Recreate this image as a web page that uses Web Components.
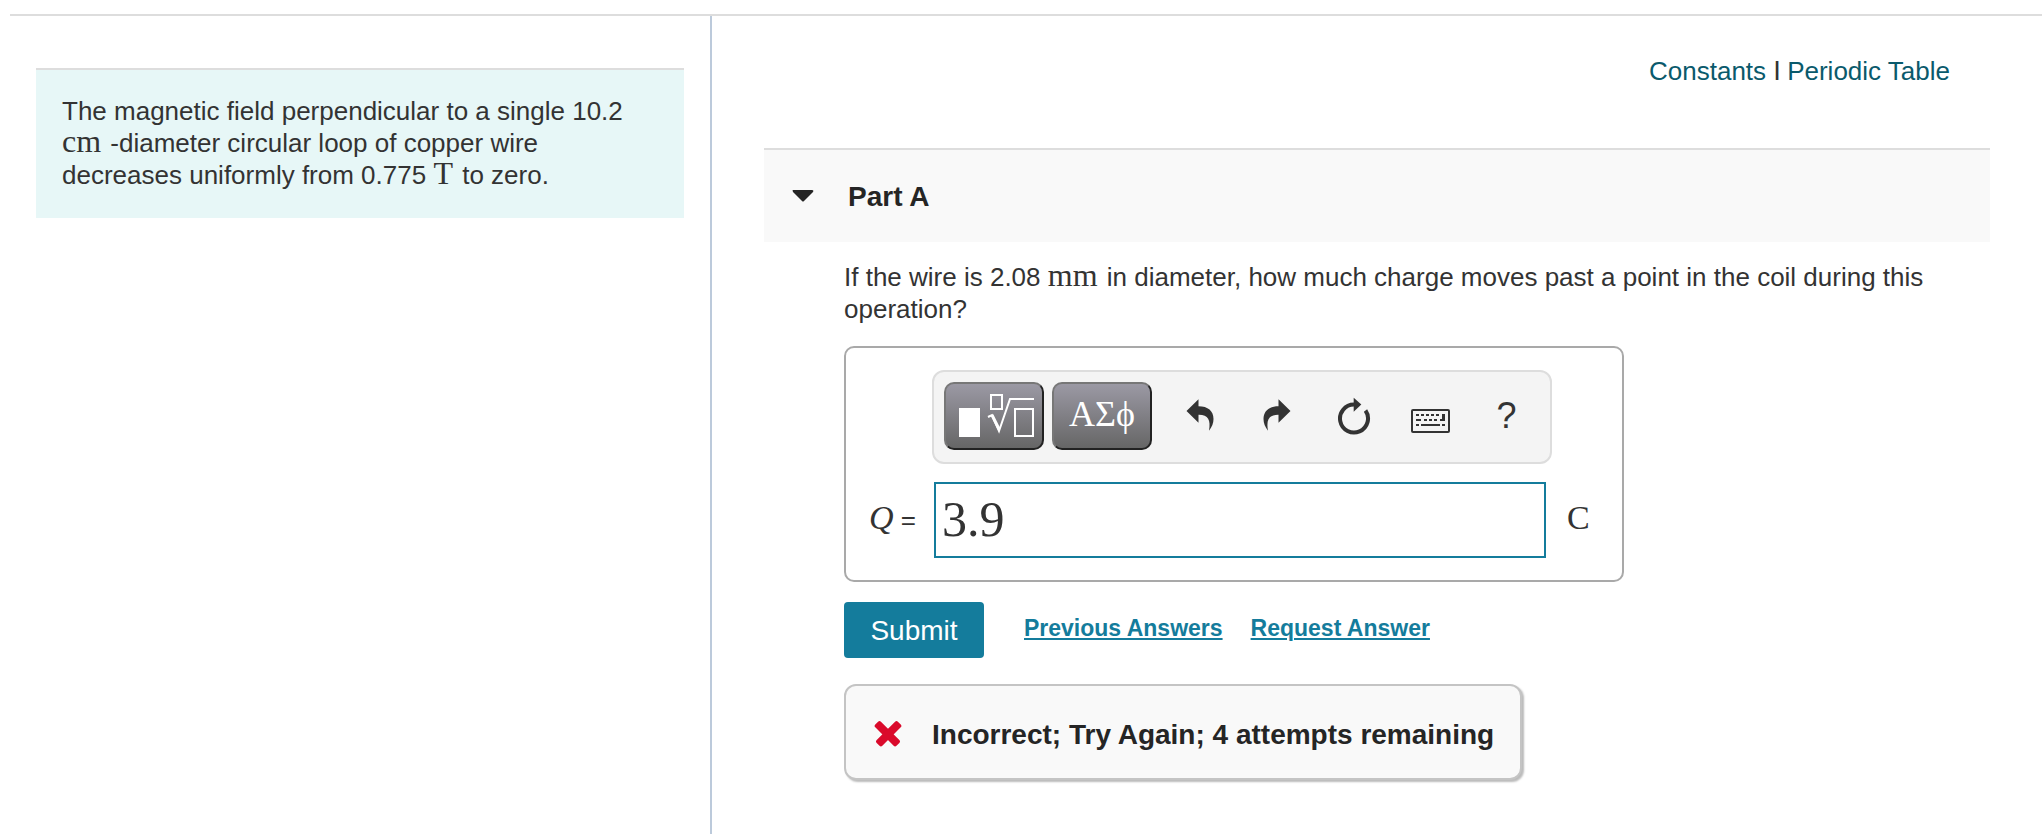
<!DOCTYPE html>
<html lang="en">
<head>
    <meta charset="utf-8">
    <title>Part A</title>
    <style>
        body {
            margin: 0;
            background-color: #fff;
            color: #333;
            font-family: "Liberation Sans", Arial, sans-serif;
            font-size: 26px;
            line-height: 32px;
        }
    </style>
</head>
<body>
    <assignment-page>
        <problem-intro slot="intro">The magnetic field perpendicular to a single 10.2 <math-unit>cm</math-unit> -diameter circular loop of copper wire decreases uniformly from 0.775 <math-unit>T</math-unit> to zero.</problem-intro>
        <resource-links></resource-links>
        <part-section>
            <span slot="title">Part A</span>
            <span slot="question">If the wire is 2.08 <math-unit>mm</math-unit> in diameter, how much charge moves past a point in the coil during this operation?</span>
            <answer-box>
                <math-toolbar slot="toolbar"></math-toolbar>
                <span slot="unit">C</span>
            </answer-box>
            <answer-actions></answer-actions>
            <answer-feedback>Incorrect; Try Again; 4 attempts remaining</answer-feedback>
        </part-section>
    </assignment-page>

    <script>
        function define(name, html) {
            const template = document.createElement("template");
            template.innerHTML = html;
            window.customElements.define(name, class extends HTMLElement {
                constructor() {
                    super();
                    this.attachShadow({ mode: "open" }).appendChild(template.content.cloneNode(true));
                }
            });
        }

        define("assignment-page", `
            <style>
                :host {
                    display: grid;
                    grid-template-columns: 175fr 333fr;
                    box-sizing: border-box;
                    min-height: calc(100vh - 14px);
                    margin: 14px 0 0 10px;
                    border-top: 2px solid #ddd;
                }

                aside {
                    padding: 52px 26px;
                }

                main {
                    border-left: 2px solid #bccadb;
                    padding: 39px 52px 52px;
                }
            </style>
            <aside><slot name="intro"></slot></aside>
            <main><slot></slot></main>
        `);

        define("math-unit", `
            <style>
                :host {
                    display: inline-block;
                    margin-right: 2px;
                    font-family: "Liberation Serif", "Times New Roman", serif;
                    font-size: 32px;
                    line-height: 28px;
                }
            </style>
            <slot></slot>
        `);

        define("problem-intro", `
            <style>
                :host {
                    display: block;
                    background-color: #e7f7f7;
                    border-top: 2px solid #ddd;
                    padding: 25px 26px 27px;
                }
            </style>
            <slot></slot>
        `);

        define("resource-links", `
            <style>
                :host {
                    display: block;
                    text-align: right;
                    padding-right: 40px;
                    margin-bottom: 61px;
                }

                a {
                    color: #0a5a6c;
                    text-decoration: none;
                }

                span {
                    padding-left: 1px;
                    font-size: 20px;
                    font-weight: bold;
                    line-height: 0;
                    vertical-align: 4px;
                }
            </style>
            <a href="#constants">Constants</a> <span>|</span> <a href="#periodic">Periodic Table</a>
        `);

        define("part-section", `
            <style>
                :host {
                    display: block;
                }

                header {
                    display: flex;
                    align-items: center;
                    height: 92px;
                    background-color: #f9f9f9;
                    border-top: 2px solid #ddd;
                    color: #252525;
                }

                header button {
                    width: 84px;
                    height: 48px;
                    padding: 0 0 0 28px;
                    border: 0;
                    background: none;
                    text-align: left;
                }

                header svg {
                    display: block;
                }

                h2 {
                    margin: 0;
                    padding-top: 2px;
                    font-size: 28px;
                }

                .body {
                    padding: 19px 26px 0 80px;
                }

                p {
                    margin: 0 0 21px;
                }
            </style>
            <header>
                <button type="button" aria-label="Collapse part">
                    <svg width="22" height="12" viewBox="0 0 22 12"><path d="M1 0H20Q22 0 21 2L12 11Q11 12 10 11L1 2Q0 0 1 0Z" fill="#252525"/></svg>
                </button>
                <h2><slot name="title"></slot></h2>
            </header>
            <div class="body">
                <p><slot name="question"></slot></p>
                <slot></slot>
            </div>
        `);

        define("answer-box", `
            <style>
                :host {
                    display: grid;
                    grid-template-columns: 86px minmax(0, 1fr) 70px;
                    row-gap: 18px;
                    align-items: center;
                    box-sizing: border-box;
                    max-width: 780px;
                    padding: 22px 0;
                    border: 2px solid #a9a9a9;
                    border-radius: 10px;
                    margin-bottom: 20px;
                }

                .toolbar {
                    grid-column: 2;
                }

                label {
                    grid-column: 1;
                    text-align: right;
                    padding: 0 16px 2px 0;
                }

                label i, .unit {
                    font-family: "Liberation Serif", "Times New Roman", serif;
                    font-size: 34px;
                }

                input {
                    box-sizing: border-box;
                    height: 76px;
                    margin: 0 6px 0 2px;
                    padding: 0 6px 2px;
                    border: 2px solid #147c9c;
                    border-radius: 0;
                    outline: 0;
                    background: #fff;
                    color: #333;
                    font-family: "Liberation Serif", "Times New Roman", serif;
                    font-size: 50px;
                }

                .unit {
                    padding: 0 0 4px 15px;
                }
            </style>
            <div class="toolbar"><slot name="toolbar"></slot></div>
            <label for="answer"><i>Q</i> =</label>
            <input id="answer" type="text" value="3.9" autocomplete="off">
            <div class="unit"><slot name="unit"></slot></div>
        `);

        define("math-toolbar", `
            <style>
                :host {
                    display: flex;
                    align-items: center;
                    box-sizing: border-box;
                    height: 94px;
                    padding: 0 4px 2px 10px;
                    background-color: #f4f4f4;
                    border: 2px solid #ddd;
                    border-radius: 12px;
                }

                button {
                    flex: none;
                    padding: 0;
                    color: #333;
                    font-family: inherit;
                }

                svg {
                    display: block;
                    margin: auto;
                }

                .palette {
                    box-sizing: border-box;
                    width: 100px;
                    height: 68px;
                    margin-right: 8px;
                    border: 2px solid;
                    border-color: #777 #222 #222 #777;
                    border-radius: 10px;
                    background: linear-gradient(#9b99a4, #666);
                    color: #fff;
                }

                .greek {
                    padding-bottom: 4px;
                    font-family: "Liberation Serif", "Times New Roman", serif;
                    font-size: 36px;
                }

                .tools {
                    display: flex;
                }

                .tools button {
                    width: 77px;
                    height: 68px;
                    border: 0;
                    background: none;
                    font-size: 36px;
                }
            </style>
            <button class="palette" type="button" aria-label="Templates">
                <svg width="96" height="64" viewBox="0 0 96 64" fill="none" stroke="#fff" stroke-width="2">
                    <rect x="13" y="24" width="21" height="29" fill="#fff" stroke="none"/>
                    <rect x="45" y="11" width="11" height="14"/>
                    <path d="M42 33l4-2 7 16 11-32h24"/>
                    <path d="M46 31l7 14" stroke-width="3"/>
                    <rect x="69" y="25" width="18" height="27"/>
                </svg>
            </button>
            <button class="palette greek" type="button">ΑΣϕ</button>
            <div class="tools">
                <button type="button" aria-label="Undo">
                    <svg width="40" height="40" viewBox="0 0 40 40" fill="#333"><path d="M7.5 15L19.5 3.3V10.3C29 10.3 34.5 15 34.5 23C34.5 27 33 31 30 34.7C32 24 29 18.5 19.5 18.7V26.7Z"/></svg>
                </button>
                <button type="button" aria-label="Redo">
                    <svg width="40" height="40" viewBox="0 0 40 40" fill="#333"><path d="M34.5 15L22.5 3.3V10.3C13 10.3 7.5 15 7.5 23C7.5 27 9 31 12 34.7C10 24 13 18.5 22.5 18.7V26.7Z"/></svg>
                </button>
                <button type="button" aria-label="Reset">
                    <svg width="40" height="40" viewBox="0 0 40 40" fill="#333">
                        <path d="M21 8.5A14 14 0 1 0 32.5 14.5" fill="none" stroke="#333" stroke-width="4"/>
                        <path d="M20.7 1.8L28.3 8.5L20.7 15.8Z"/>
                    </svg>
                </button>
                <button type="button" aria-label="Keyboard shortcuts">
                    <svg width="40" height="40" viewBox="0 0 40 40" fill="#333">
                        <rect x="2" y="14" width="37" height="22" rx="1" fill="none" stroke="#333" stroke-width="2"/>
                        <path d="M6 18h3v2H6zM11 18h3v2h-3zM16 18h3v2h-3zM21 18h3v2h-3zM26 18h3v2h-3zM32 18h3v7h-5v-2h2z"/>
                        <path d="M6 23h5v2H6zM14 23h3v2h-3zM19 23h3v2h-3zM24 23h3v2h-3zM6 28h3v2H6zM11 28h19v2H11zM32 28h3v2h-3z"/>
                    </svg>
                </button>
                <button type="button">?</button>
            </div>
        `);

        define("answer-actions", `
            <style>
                :host {
                    display: flex;
                    gap: 28px;
                    margin-bottom: 26px;
                }

                button {
                    min-width: 140px;
                    height: 56px;
                    margin-right: 12px;
                    padding: 2px 26px 0;
                    border: 0;
                    border-radius: 4px;
                    background-color: #147c9c;
                    color: #fff;
                    font-family: inherit;
                    font-size: 28px;
                }

                a {
                    margin-top: 10px;
                    color: #147c9c;
                    font-size: 23px;
                    font-weight: bold;
                    text-underline-offset: 2px;
                    text-decoration-thickness: 2px;
                }
            </style>
            <button type="submit">Submit</button>
            <a href="#previous">Previous Answers</a>
            <a href="#request">Request Answer</a>
        `);

        define("answer-feedback", `
            <style>
                :host {
                    display: flex;
                    align-items: center;
                    box-sizing: border-box;
                    width: fit-content;
                    height: 96px;
                    padding: 4px 26px 0 28px;
                    gap: 30px;
                    background-color: #f9f9f9;
                    border: 2px solid #c4c4c4;
                    border-radius: 12px;
                    box-shadow: 2px 2px 2px #bbb;
                    color: #252525;
                    font-size: 28px;
                    font-weight: bold;
                }

                span {
                    padding-top: 1px;
                }
            </style>
            <svg width="28" height="28" viewBox="0 0 28 28" fill="#da0a2b">
                <rect x="-1" y="10" width="30" height="8" rx="2" transform="rotate(45 14 13)"/>
                <rect x="-1" y="10" width="30" height="8" rx="2" transform="rotate(-45 14 13)"/>
            </svg>
            <span><slot></slot></span>
        `);
    </script>
</body>
</html>
